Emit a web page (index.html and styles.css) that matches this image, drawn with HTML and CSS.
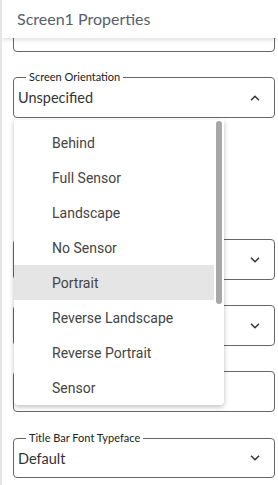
FILE: index.html
```html
<!DOCTYPE html>
<html>
<head>
<meta charset="utf-8">
<link rel="stylesheet" href="styles.css">
</head>
<body>
<div class="panel">
  <div class="header"><span class="title">Screen1 Properties</span></div>
  <div class="content">
    <div class="field first"></div>
    <div class="field orient">
      <span class="legend">Screen Orientation</span>
      <span class="value">Unspecified</span>
      <svg class="chev" width="10" height="6" viewBox="0 0 10 6"><polyline points="1,5.2 5,1.2 9,5.2" fill="none" stroke="#333" stroke-width="1.5"/></svg>
    </div>
    <div class="spacer"></div>
    <div class="field">
      <span class="value"></span>
      <svg class="chev" width="10" height="6" viewBox="0 0 10 6"><polyline points="1,0.8 5,4.8 9,0.8" fill="none" stroke="#333" stroke-width="1.5"/></svg>
    </div>
    <div class="field">
      <span class="value"></span>
      <svg class="chev" width="10" height="6" viewBox="0 0 10 6"><polyline points="1,0.8 5,4.8 9,0.8" fill="none" stroke="#333" stroke-width="1.5"/></svg>
    </div>
    <div class="field"></div>
    <div class="field typeface">
      <span class="legend">Title Bar Font Typeface</span>
      <span class="value">Default</span>
      <svg class="chev" width="10" height="6" viewBox="0 0 10 6"><polyline points="1,0.8 5,4.8 9,0.8" fill="none" stroke="#333" stroke-width="1.5"/></svg>
    </div>
  </div>
  <div class="menu">
    <ul class="list">
      <li class="item">Behind</li>
      <li class="item">Full Sensor</li>
      <li class="item">Landscape</li>
      <li class="item">No Sensor</li>
      <li class="item active">Portrait</li>
      <li class="item">Reverse Landscape</li>
      <li class="item">Reverse Portrait</li>
      <li class="item">Sensor</li>
    </ul>
    <div class="thumb"></div>
  </div>
</div>
</body>
</html>
```
FILE: styles.css
```css
html, body {
  margin: 0;
  padding: 0;
  background: #fff;
}
.panel {
  position: relative;
  height: 485px;
  overflow: hidden;
  border-left: 2px solid #e6e6e6;
  font-family: "Lato", "Open Sans", sans-serif;
}
.header {
  position: relative;
  z-index: 2;
  height: 38px;
  background: #fff;
  box-shadow: 0 2px 4px rgba(0, 0, 0, 0.13);
  display: flex;
  align-items: center;
  padding-left: 15px;
}
.title {
  font-size: 16px;
  color: #56606c;
  margin-top: -2px;
}
.content {
  padding: 0 3px 0 11px;
  display: flex;
  flex-direction: column;
  gap: 25px;
}
.field {
  position: relative;
  height: 41px;
  box-sizing: border-box;
  border: 1px solid #666;
  border-radius: 4px;
  display: flex;
  align-items: center;
  justify-content: space-between;
  padding: 0 14px 0 4px;
}
.field.first {
  margin-top: -27px;
}
.spacer {
  height: 96px;
  margin: -25px 0 0;
}
.field.typeface {
  margin-top: 1px;
  height: 40px;
}
.legend {
  position: absolute;
  top: -8px;
  left: 12px;
  padding: 0 3px;
  background: #fff;
  font-size: 11px;
  line-height: 14px;
  color: #222;
}
.value {
  font-size: 14.5px;
  color: #333;
}
.chev {
  display: block;
}
.menu {
  position: absolute;
  z-index: 3;
  top: 120px;
  left: 12px;
  width: 210px;
  height: 285px;
  background: #fff;
  border-radius: 0 0 4px 4px;
  box-shadow: 0 2px 5px rgba(0, 0, 0, 0.25);
  overflow: hidden;
}
.list {
  list-style: none;
  margin: 0;
  padding: 5px 0 0;
  width: 200px;
}
.item {
  height: 35px;
  display: flex;
  align-items: center;
  padding-left: 38px;
  font-family: "Roboto", sans-serif;
  font-size: 14px;
  color: #444;
}
.item.active {
  background: #e5e5e5;
}
.thumb {
  position: absolute;
  top: 1px;
  left: 202px;
  width: 6px;
  height: 183px;
  border-radius: 3px;
  background: #a8a8a8;
}
```
